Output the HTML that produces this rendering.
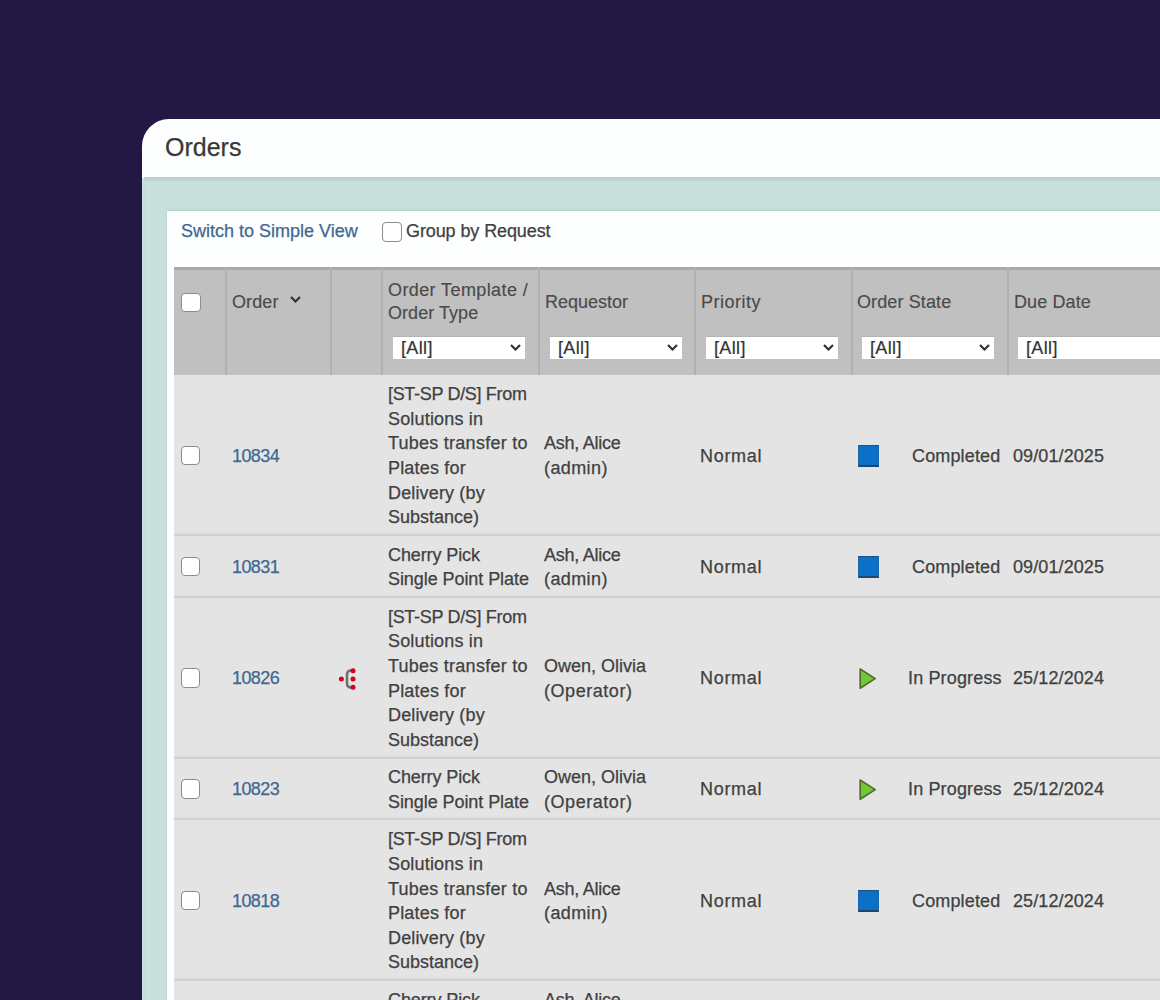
<!DOCTYPE html><html><head><meta charset="utf-8"><style>
*{margin:0;padding:0;box-sizing:border-box}
html,body{width:1160px;height:1000px;overflow:hidden;background:#231744;font-family:"Liberation Sans",sans-serif}
.a{position:absolute}
.t{position:absolute;white-space:nowrap;font-size:18px;line-height:24.64px;color:#404040;-webkit-text-stroke:0.25px #404040}
.h{color:#4a4a4a;-webkit-text-stroke:0.15px #4a4a4a}
.card{position:absolute;left:142px;top:118.5px;width:1100px;height:1000px;background:#fdfefe;border-top-left-radius:27px}
.teal{position:absolute;left:144px;top:177px;width:1100px;height:900px;background:#cae0dd;border-top:1px solid #b9ccc9;box-shadow:inset 0 3px 3px -1px rgba(60,80,80,0.12)}
.panel{position:absolute;left:167px;top:211px;width:1100px;height:900px;background:#fdfefe;box-shadow:0 -1px 2px rgba(60,90,90,0.14)}
.cb{position:absolute;width:19.5px;height:19.5px;border:1.8px solid #8c8c8c;border-radius:4px;background:#fff}
.hdr{position:absolute;left:174px;top:267px;width:1000px;height:108px;background:#c0c0c0;border-top:3px solid #a9a9a9}
.vs{position:absolute;top:267px;width:2px;height:108px;background:#b0b0b0}
.rows{position:absolute;left:174px;top:375px;width:1000px;height:700px;background:#e4e4e4}
.hl{position:absolute;left:174px;width:1000px;height:2px;background:#d2d2d2;box-shadow:0 -1px 1px rgba(0,0,0,0.03)}
.sel{position:absolute;top:336px;height:23px;background:#fff;border-top:1px solid #b4b4b4}
.sel .t{left:8px;top:-1px;color:#333;-webkit-text-stroke:0.2px #333;letter-spacing:0.35px}
.chev{position:absolute;width:11px;height:7px}
.link{color:#416890;-webkit-text-stroke:0.25px #416890}
</style></head><body>
<div class="card"></div>
<div class="t" style="left:165px;top:132px;font-size:25px;line-height:31px;color:#383838">Orders</div>
<div class="teal"></div>
<div class="a" style="left:142px;top:178px;width:2px;height:830px;background:#cddbe3"></div>
<div class="panel"></div>
<div class="t link" style="left:181.00px;top:219.00px">Switch to Simple View</div>
<div class="cb" style="left:382px;top:222px"></div>
<div class="t" style="left:406.00px;top:219.00px;letter-spacing:-0.10px">Group by Request</div>
<div class="hdr"></div>
<div class="vs" style="left:225px"></div>
<div class="vs" style="left:330px"></div>
<div class="vs" style="left:381px"></div>
<div class="vs" style="left:538px"></div>
<div class="vs" style="left:694px"></div>
<div class="vs" style="left:851px"></div>
<div class="vs" style="left:1007px"></div>
<div class="cb" style="left:181px;top:292.6px"></div>
<div class="t h" style="left:232.00px;top:289.50px;letter-spacing:0.10px">Order</div>
<svg class="chev" style="left:290px;top:296px" viewBox="0 0 11 7"><path d="M1 1 L5.5 5.5 L10 1" fill="none" stroke="#333" stroke-width="2.2"/></svg>
<div class="t h" style="left:388.00px;top:277.50px;letter-spacing:0.40px">Order Template /</div>
<div class="t h" style="left:388.00px;top:301.00px;letter-spacing:0.05px">Order Type</div>
<div class="t h" style="left:545.00px;top:289.50px">Requestor</div>
<div class="t h" style="left:701.00px;top:289.50px;letter-spacing:0.50px">Priority</div>
<div class="t h" style="left:857.00px;top:289.50px;letter-spacing:0.12px">Order State</div>
<div class="t h" style="left:1014.00px;top:289.50px;letter-spacing:0.12px">Due Date</div>
<div class="sel" style="left:393px;width:132px"><div class="t">[All]</div><svg class="chev" style="left:117px;top:7px" viewBox="0 0 11 7"><path d="M1 1 L5.5 5.5 L10 1" fill="none" stroke="#333" stroke-width="2.2"/></svg></div>
<div class="sel" style="left:550px;width:132px"><div class="t">[All]</div><svg class="chev" style="left:117px;top:7px" viewBox="0 0 11 7"><path d="M1 1 L5.5 5.5 L10 1" fill="none" stroke="#333" stroke-width="2.2"/></svg></div>
<div class="sel" style="left:706px;width:132px"><div class="t">[All]</div><svg class="chev" style="left:117px;top:7px" viewBox="0 0 11 7"><path d="M1 1 L5.5 5.5 L10 1" fill="none" stroke="#333" stroke-width="2.2"/></svg></div>
<div class="sel" style="left:862px;width:132px"><div class="t">[All]</div><svg class="chev" style="left:117px;top:7px" viewBox="0 0 11 7"><path d="M1 1 L5.5 5.5 L10 1" fill="none" stroke="#333" stroke-width="2.2"/></svg></div>
<div class="sel" style="left:1018px;width:200px"><div class="t">[All]</div></div>
<div class="rows"></div>
<div class="cb" style="left:180.8px;top:445.6px"></div>
<div class="t link" style="left:232.00px;top:443.75px;letter-spacing:-0.60px">10834</div>
<div class="t" style="left:388.00px;top:382.15px;letter-spacing:-0.32px">[ST-SP D/S] From</div>
<div class="t" style="left:388.00px;top:406.79px;letter-spacing:0.17px">Solutions in</div>
<div class="t" style="left:388.00px;top:431.43px;letter-spacing:0.25px">Tubes transfer to</div>
<div class="t" style="left:388.00px;top:456.07px;letter-spacing:0.18px">Plates for</div>
<div class="t" style="left:388.00px;top:480.71px;letter-spacing:0.15px">Delivery (by</div>
<div class="t" style="left:388.00px;top:505.35px">Substance)</div>
<div class="t" style="left:544.00px;top:431.44px;letter-spacing:-0.25px">Ash, Alice</div>
<div class="t" style="left:544.00px;top:456.07px;letter-spacing:0.40px">(admin)</div>
<div class="t" style="left:700.00px;top:443.75px;letter-spacing:0.70px">Normal</div>
<div class="a" style="left:857.6px;top:444.6px;width:21.6px;height:22.8px;background:#0b70c8;border-top:1.6px solid #1f4f80;border-bottom:2px solid #22456a;border-left:1px solid #1d66a8;border-right:1px solid #1d66a8"></div>
<div class="t" style="left:912.00px;top:443.75px;letter-spacing:0.15px">Completed</div>
<div class="t" style="left:1013.00px;top:443.75px;letter-spacing:0.10px">09/01/2025</div>
<div class="hl" style="top:533.55px"></div>
<div class="cb" style="left:180.8px;top:556.7px"></div>
<div class="t link" style="left:232.00px;top:554.90px;letter-spacing:-0.60px">10831</div>
<div class="t" style="left:388.00px;top:542.58px;letter-spacing:-0.10px">Cherry Pick</div>
<div class="t" style="left:388.00px;top:567.22px;letter-spacing:-0.07px">Single Point Plate</div>
<div class="t" style="left:544.00px;top:542.58px;letter-spacing:-0.25px">Ash, Alice</div>
<div class="t" style="left:544.00px;top:567.22px;letter-spacing:0.40px">(admin)</div>
<div class="t" style="left:700.00px;top:554.90px;letter-spacing:0.70px">Normal</div>
<div class="a" style="left:857.6px;top:555.7px;width:21.6px;height:22.8px;background:#0b70c8;border-top:1.6px solid #1f4f80;border-bottom:2px solid #22456a;border-left:1px solid #1d66a8;border-right:1px solid #1d66a8"></div>
<div class="t" style="left:912.00px;top:554.90px;letter-spacing:0.15px">Completed</div>
<div class="t" style="left:1013.00px;top:554.90px;letter-spacing:0.10px">09/01/2025</div>
<div class="hl" style="top:596.30px"></div>
<div class="cb" style="left:180.8px;top:668.2px"></div>
<div class="t link" style="left:232.00px;top:666.43px;letter-spacing:-0.60px">10826</div>
<div class="t" style="left:388.00px;top:604.83px;letter-spacing:-0.32px">[ST-SP D/S] From</div>
<div class="t" style="left:388.00px;top:629.47px;letter-spacing:0.17px">Solutions in</div>
<div class="t" style="left:388.00px;top:654.11px;letter-spacing:0.25px">Tubes transfer to</div>
<div class="t" style="left:388.00px;top:678.75px;letter-spacing:0.18px">Plates for</div>
<div class="t" style="left:388.00px;top:703.39px;letter-spacing:0.15px">Delivery (by</div>
<div class="t" style="left:388.00px;top:728.03px">Substance)</div>
<div class="t" style="left:544.00px;top:654.11px">Owen, Olivia</div>
<div class="t" style="left:544.00px;top:678.75px;letter-spacing:0.55px">(Operator)</div>
<div class="t" style="left:700.00px;top:666.43px;letter-spacing:0.70px">Normal</div>
<svg class="a" style="left:858px;top:667.0px;width:20px;height:23px" viewBox="0 0 20 23"><path d="M2.2 2 L17.2 11.6 L2.2 21.2 Z" fill="#70cb33" stroke="#566a30" stroke-width="1.7" stroke-linejoin="round"/></svg>
<div class="t" style="left:908.00px;top:666.43px;letter-spacing:0.15px">In Progress</div>
<div class="t" style="left:1013.00px;top:666.43px;letter-spacing:0.10px">25/12/2024</div>
<svg class="a" style="left:336px;top:666.5px;width:22px;height:24px" viewBox="0 0 22 24"><path d="M15 3.5 Q11 3.5 11 8 L11 16 Q11 20.5 15 20.5" fill="none" stroke="#707070" stroke-width="2.6"/><circle cx="5.4" cy="12" r="2.5" fill="#d4001e"/><circle cx="17" cy="3.7" r="2.5" fill="#d4001e"/><circle cx="17" cy="12" r="2.5" fill="#d4001e"/><circle cx="17" cy="20.3" r="2.5" fill="#d4001e"/></svg>
<div class="hl" style="top:756.60px"></div>
<div class="cb" style="left:180.8px;top:779.3px"></div>
<div class="t link" style="left:232.00px;top:777.48px;letter-spacing:-0.60px">10823</div>
<div class="t" style="left:388.00px;top:765.16px;letter-spacing:-0.10px">Cherry Pick</div>
<div class="t" style="left:388.00px;top:789.80px;letter-spacing:-0.07px">Single Point Plate</div>
<div class="t" style="left:544.00px;top:765.16px">Owen, Olivia</div>
<div class="t" style="left:544.00px;top:789.80px;letter-spacing:0.55px">(Operator)</div>
<div class="t" style="left:700.00px;top:777.48px;letter-spacing:0.70px">Normal</div>
<svg class="a" style="left:858px;top:778.0px;width:20px;height:23px" viewBox="0 0 20 23"><path d="M2.2 2 L17.2 11.6 L2.2 21.2 Z" fill="#70cb33" stroke="#566a30" stroke-width="1.7" stroke-linejoin="round"/></svg>
<div class="t" style="left:908.00px;top:777.48px;letter-spacing:0.15px">In Progress</div>
<div class="t" style="left:1013.00px;top:777.48px;letter-spacing:0.10px">25/12/2024</div>
<div class="hl" style="top:818.40px"></div>
<div class="cb" style="left:180.8px;top:890.6px"></div>
<div class="t link" style="left:232.00px;top:888.83px;letter-spacing:-0.60px">10818</div>
<div class="t" style="left:388.00px;top:827.23px;letter-spacing:-0.32px">[ST-SP D/S] From</div>
<div class="t" style="left:388.00px;top:851.87px;letter-spacing:0.17px">Solutions in</div>
<div class="t" style="left:388.00px;top:876.51px;letter-spacing:0.25px">Tubes transfer to</div>
<div class="t" style="left:388.00px;top:901.15px;letter-spacing:0.18px">Plates for</div>
<div class="t" style="left:388.00px;top:925.79px;letter-spacing:0.15px">Delivery (by</div>
<div class="t" style="left:388.00px;top:950.43px">Substance)</div>
<div class="t" style="left:544.00px;top:876.51px;letter-spacing:-0.25px">Ash, Alice</div>
<div class="t" style="left:544.00px;top:901.15px;letter-spacing:0.40px">(admin)</div>
<div class="t" style="left:700.00px;top:888.83px;letter-spacing:0.70px">Normal</div>
<div class="a" style="left:857.6px;top:889.6px;width:21.6px;height:22.8px;background:#0b70c8;border-top:1.6px solid #1f4f80;border-bottom:2px solid #22456a;border-left:1px solid #1d66a8;border-right:1px solid #1d66a8"></div>
<div class="t" style="left:912.00px;top:888.83px;letter-spacing:0.15px">Completed</div>
<div class="t" style="left:1013.00px;top:888.83px;letter-spacing:0.10px">25/12/2024</div>
<div class="hl" style="top:979.30px"></div>
<div class="cb" style="left:180.8px;top:1001.9px"></div>
<div class="t link" style="left:232.00px;top:1000.13px;letter-spacing:-0.60px">10815</div>
<div class="t" style="left:388.00px;top:987.81px;letter-spacing:-0.10px">Cherry Pick</div>
<div class="t" style="left:388.00px;top:1012.45px;letter-spacing:-0.07px">Single Point Plate</div>
<div class="t" style="left:544.00px;top:987.81px;letter-spacing:-0.25px">Ash, Alice</div>
<div class="t" style="left:544.00px;top:1012.45px;letter-spacing:0.40px">(admin)</div>
<div class="t" style="left:700.00px;top:1000.13px;letter-spacing:0.70px">Normal</div>
<div class="t" style="left:912.00px;top:1000.13px;letter-spacing:0.15px">Completed</div>
<div class="t" style="left:1013.00px;top:1000.13px;letter-spacing:0.10px">25/12/2024</div>
</body></html>
